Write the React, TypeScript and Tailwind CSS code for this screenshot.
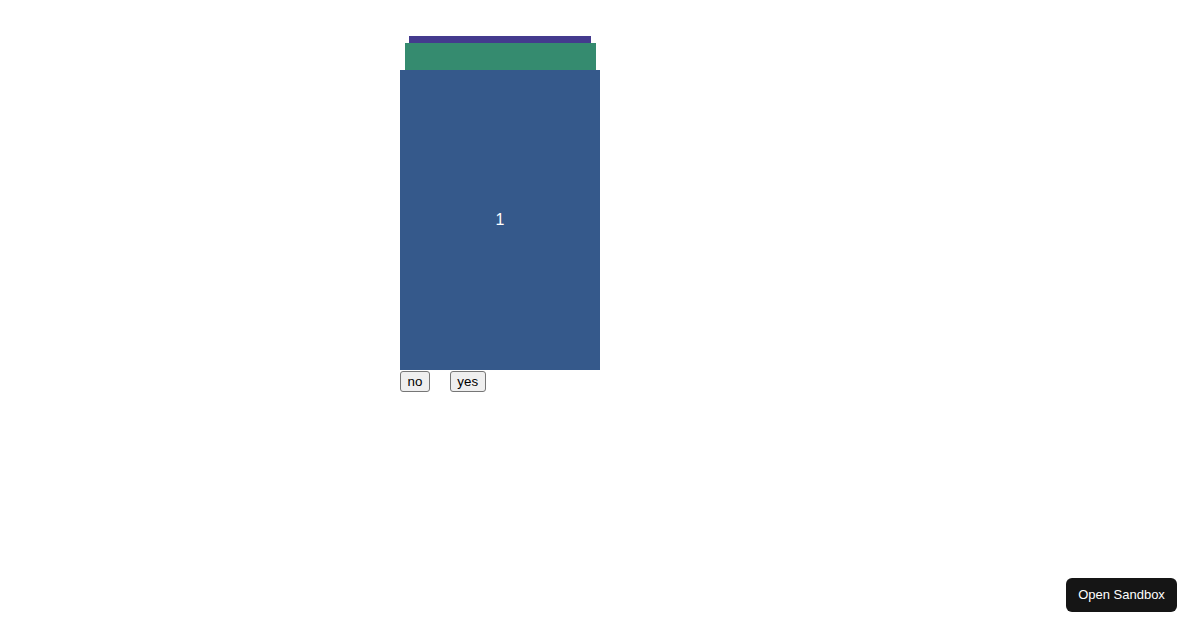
export default function App() {
  return (
    <div className="relative h-[630px] w-[1200px] bg-white font-['Liberation_Sans',Arial,sans-serif]">
      <div className="pl-[400px] pt-[70px]">
        <div className="relative h-[300px] w-[200px]">
          {/* cards stacked behind the top one */}
          <div className="absolute left-[9px] top-[-34px] h-[290px] w-[182px] bg-[#443a8e]" aria-hidden />
          <div className="absolute left-[5px] top-[-27px] h-[290px] w-[191px] bg-[#358b6f]" aria-hidden />
          <div className="relative flex h-[300px] w-[200px] items-center justify-center bg-[#35598b] text-[16px] text-white">
            1
          </div>
        </div>
        <div className="mt-[1px] flex gap-[20px]">
          <button className="h-[21px] rounded-[3px] border border-[#767676] bg-[#efefef] px-[6.5px] text-[13.333px] leading-none text-black">
            no
          </button>
          <button className="h-[21px] rounded-[3px] border border-[#767676] bg-[#efefef] px-[6.5px] text-[13.333px] leading-none text-black">
            yes
          </button>
        </div>
      </div>
      <button className="absolute bottom-[18px] right-[23px] h-[34px] w-[111px] rounded-[6px] bg-[#151515] text-[13px] text-white">
        Open Sandbox
      </button>
    </div>
  );
}
